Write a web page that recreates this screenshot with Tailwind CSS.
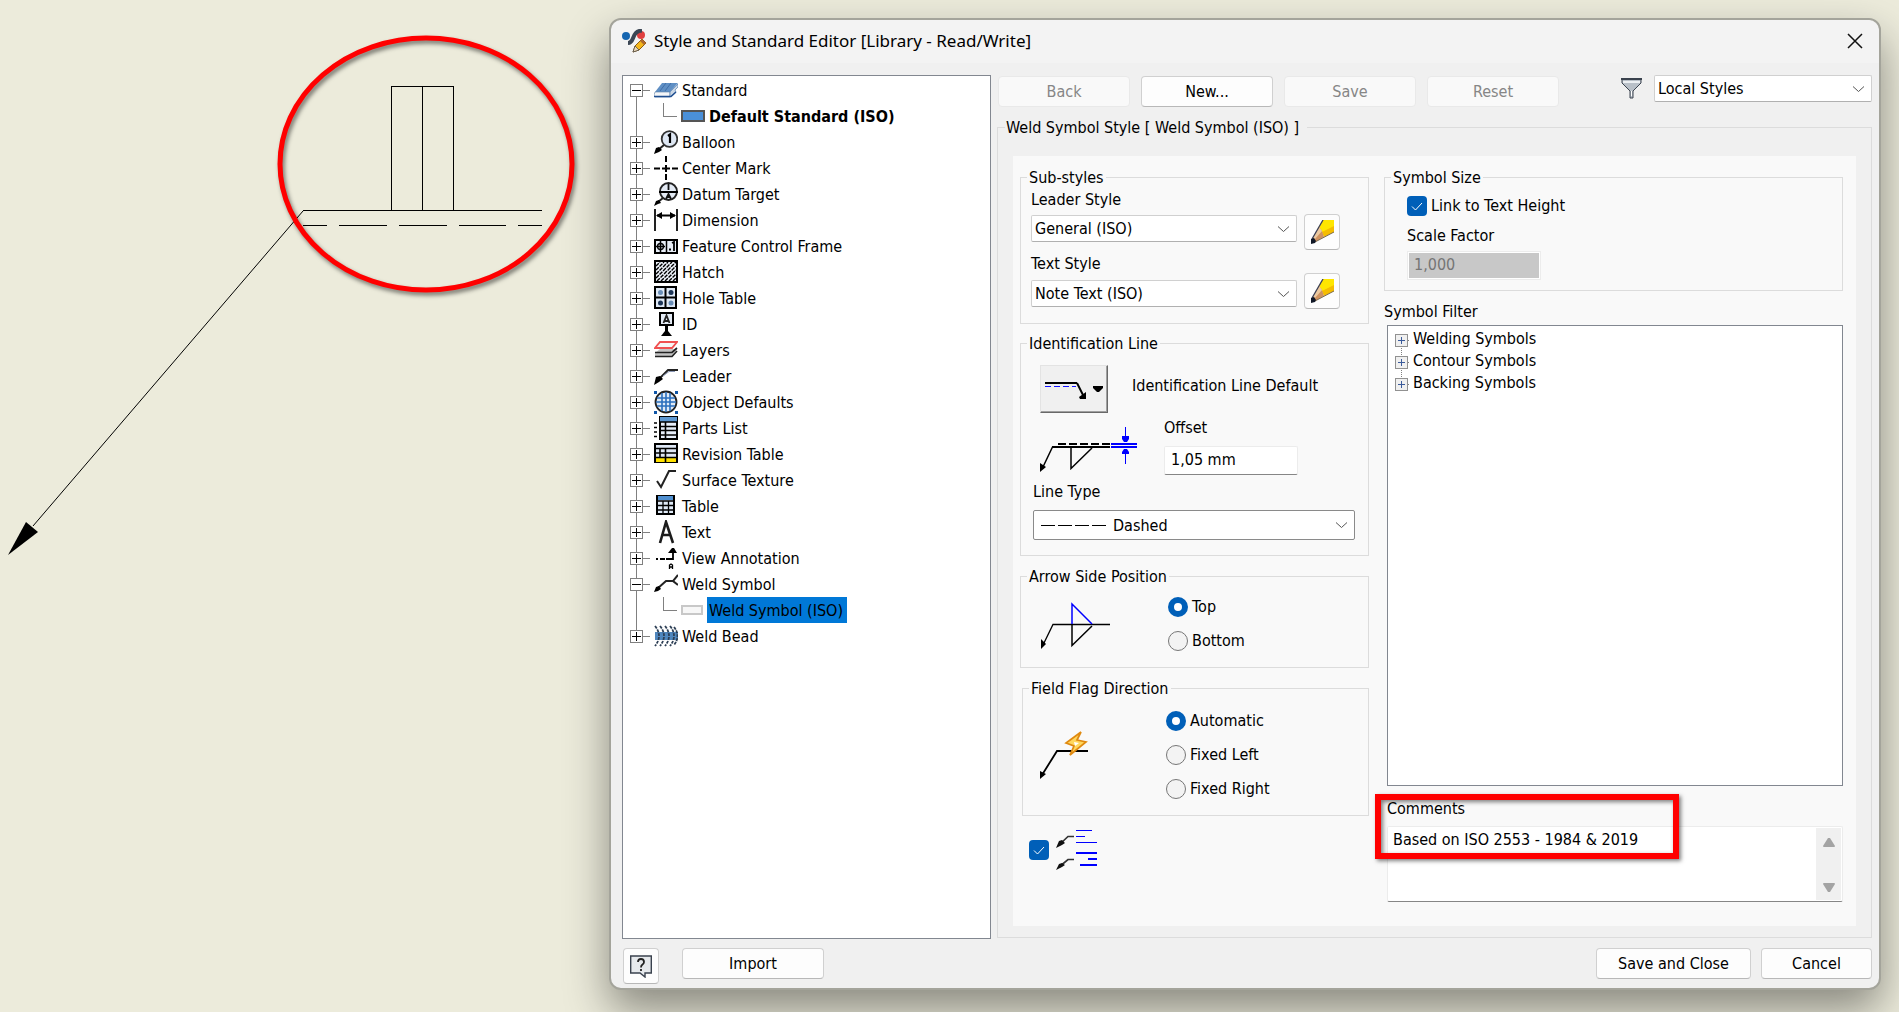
<!DOCTYPE html>
<html lang="en">
<head>
  <meta charset="utf-8"/>
  <meta content="width=device-width, initial-scale=1" name="viewport"/>
  <title>Style and Standard Editor</title>
  <script src="https://cdn.jsdelivr.net/npm/@tailwindcss/browser@4"></script>
</head>
<body class="bg-[#ecebdb] text-black font-['DejaVu_Sans_Condensed','DejaVu_Sans',sans-serif] text-base leading-6">
<main class="flex min-h-screen pt-[18px] pb-[22px] pr-[18px] overflow-hidden relative">

  <!-- Drawing sheet -->
  <div class="w-[609px] shrink-0">
    <svg class="absolute left-0 top-0" width="609" height="600" fill="none" stroke="#000">
      <path d="M391.500 210V86.500H453.500V210M422.500 86V210M303 210.500H542" shape-rendering="crispEdges"/>
      <path d="M303 225.500H327M339 225.500H387M399 225.500H447M459 225.500H506M518 225.500H542" shape-rendering="crispEdges"/>
      <path d="M303 211L33 526"/>
      <path d="M8 555L26 522L38 532Z" fill="#000" stroke="none"/>
      <ellipse cx="426" cy="164" rx="146" ry="126" stroke="#f00" stroke-width="5" class="drop-shadow-[2px_3px_2px_rgba(0,0,0,0.5)]"/>
    </svg>
  </div>

  <!-- Dialog -->
  <section class="relative flex-1 flex flex-col rounded-xl border-2 border-[#a4a49b] bg-[#f0f0f0] shadow-[0_20px_44px_rgba(0,0,0,0.42)]">
    <header class="h-[43px] shrink-0 rounded-t-xl bg-[#f3f3f3] flex items-center pb-0.5 pl-[11px] pr-4">
      <svg width="24" height="24" viewBox="0 0 24 24">
        <circle cx="4" cy="7" r="4" fill="#1565b0"/>
        <circle cx="19" cy="6" r="4" fill="#e04040"/>
        <path d="M6 14C13 14 9 2 20 1.500" fill="none" stroke="#3c4654" stroke-width="4"/>
        <path d="M11 23L13 17L20 10L24 14L17 21Z" fill="#f5b81c" stroke="#8a5a14"/>
        <path d="M11 23L13 17L17 21Z" fill="#ecd9b8" stroke="#444" stroke-width=".7"/>
        <path d="M20 10L24 14L22 16L18 12Z" fill="#b06a30"/>
      </svg>
      <h1 class="ml-2 flex-1 font-['Noto_Sans',sans-serif] text-[17px]">Style and Standard Editor [Library - Read/Write]</h1>
      <button aria-label="Close">
        <svg width="16" height="16" viewBox="0 0 16 16" stroke="#111" stroke-width="1.500"><path d="M1 1L15 15M15 1L1 15"/></svg>
      </button>
    </header>

    <div class="flex-1 flex flex-col pt-3 pb-1 pl-[11px] pr-[7px]">
      <div class="flex-1 flex gap-[6px]">

        <!-- Style tree, filled by the script below -->
        <nav class="w-[369px] shrink-0 bg-white border border-[#828790] pt-px pl-[7px]">
          <ul id="styleTree"></ul>
        </nav>

        <div class="flex-1 flex flex-col pb-px">
          <!-- Toolbar -->
          <div class="h-8 mb-[10px] flex items-start">
            <div class="flex gap-[11px] pt-px pl-px">
              <button disabled class="w-[132px] h-[31px] rounded bg-[#f9f9f9] border border-[#e9e9e9] text-[#868686]">Back</button>
              <button class="w-[132px] h-[31px] rounded bg-[#fdfdfd] border border-[#d0d0d0] border-b-[#b8b8b8]">New...</button>
              <button disabled class="w-[132px] h-[31px] rounded bg-[#f9f9f9] border border-[#e9e9e9] text-[#868686]">Save</button>
              <button disabled class="w-[132px] h-[31px] rounded bg-[#f9f9f9] border border-[#e9e9e9] text-[#868686]">Reset</button>
            </div>
            <svg class="ml-auto mr-3 mt-[3px]" width="21" height="21" viewBox="0 0 21 21">
              <path d="M1 1H20V5L12 13V20H9V13L1 5Z" fill="#b9c0c8" stroke="#3c4450"/>
              <path d="M0 0H21V2H0Z" fill="#3a424e"/>
              <path d="M2 3H19V5H2Z" fill="#eceff2"/>
              <path d="M10 13H11V18H10Z" fill="#fff"/>
            </svg>
            <div class="relative">
              <select aria-label="Style filter" class="block appearance-none w-[218px] h-[27px] bg-white border border-[#d0d0d0] border-b-[#b0b0b0] rounded-xs pl-[3px] pt-px leading-5">
                <option>Local Styles</option>
              </select>
              <svg class="absolute right-2 top-[11px] pointer-events-none" width="11" height="6" fill="none" stroke="#555"><path d="M0 .5L5.500 5.500L11 .5"/></svg>
            </div>
          </div>

          <fieldset class="flex-1 flex flex-col border border-[#dcdcdc] pt-[19px] pb-[11px] px-[15px]">
            <legend class="-ml-2 px-px pr-2 h-5 leading-[22px]">Weld Symbol Style [ Weld Symbol (ISO) ]</legend>

            <div class="flex-1 flex gap-[15px] bg-[#f9f9f9] pt-[11px] pb-6 pl-[7px] pr-[13px]">
              <!-- Left column -->
              <div class="w-[349px] shrink-0">
                <fieldset class="border border-[#dcdcdc] px-[10px] pb-[14px] flex gap-[7px]">
                  <legend class="-ml-1 px-0.5 h-5 leading-[22px]">Sub-styles</legend>
                  <div class="w-[266px]">
                    <label for="leaderStyle" class="block h-6 leading-[26px]">Leader Style</label>
                    <div class="relative mt-1 mb-[9px]">
                      <select id="leaderStyle" class="block appearance-none w-full h-[27px] bg-white border border-[#d0d0d0] border-b-[#b0b0b0] rounded-xs pl-[3px] pt-px leading-5">
                        <option>General (ISO)</option>
                      </select>
                      <svg class="absolute right-2 top-[11px] pointer-events-none" width="11" height="6" fill="none" stroke="#555"><path d="M0 .5L5.500 5.500L11 .5"/></svg>
                    </div>
                    <label for="textStyle" class="block h-6 leading-[26px]">Text Style</label>
                    <div class="relative mt-[5px]">
                      <select id="textStyle" class="block appearance-none w-full h-[27px] bg-white border border-[#d0d0d0] border-b-[#b0b0b0] rounded-xs pl-[3px] pt-px leading-5">
                        <option>Note Text (ISO)</option>
                      </select>
                      <svg class="absolute right-2 top-[11px] pointer-events-none" width="11" height="6" fill="none" stroke="#555"><path d="M0 .5L5.500 5.500L11 .5"/></svg>
                    </div>
                  </div>
                  <div class="flex flex-col gap-[23px] pt-[27px]">
                    <button aria-label="Edit leader style" class="size-9 rounded border border-[#d0d0d0] border-b-[#b8b8b8] bg-[#fdfdfd] flex items-center justify-center">
                      <svg width="24" height="24" viewBox="0 0 24 24">
                        <path d="M13 0H24V12L14 16L9 7Z" fill="#ffe600"/>
                        <path d="M24 6V12L14 17L12 12Z" fill="#f5bd00"/>
                        <path d="M9 7L12 11L14 17L5 22L2 19Z" fill="#cf9260"/>
                        <path d="M9 7L12 11L5 19L3 18Z" fill="#ecc9a0"/>
                        <path d="M13 0L2 19" fill="none" stroke="#3a3f55" stroke-width="1.300"/>
                        <path d="M5 22L24 12" fill="none" stroke="#7a6a50"/>
                        <path d="M1 24L1 19L4 18L6 21L5 23Z" fill="#111827"/>
                      </svg>
                    </button>
                    <button aria-label="Edit text style" class="size-9 rounded border border-[#d0d0d0] border-b-[#b8b8b8] bg-[#fdfdfd] flex items-center justify-center">
                      <svg width="24" height="24" viewBox="0 0 24 24">
                        <path d="M13 0H24V12L14 16L9 7Z" fill="#ffe600"/>
                        <path d="M24 6V12L14 17L12 12Z" fill="#f5bd00"/>
                        <path d="M9 7L12 11L14 17L5 22L2 19Z" fill="#cf9260"/>
                        <path d="M9 7L12 11L5 19L3 18Z" fill="#ecc9a0"/>
                        <path d="M13 0L2 19" fill="none" stroke="#3a3f55" stroke-width="1.300"/>
                        <path d="M5 22L24 12" fill="none" stroke="#7a6a50"/>
                        <path d="M1 24L1 19L4 18L6 21L5 23Z" fill="#111827"/>
                      </svg>
                    </button>
                  </div>
                </fieldset>

                <fieldset class="mt-[9px] border border-[#dcdcdc] pt-3 px-3 pb-[15px]">
                  <legend class="-ml-[6px] px-0.5 h-5 leading-[22px]">Identification Line</legend>
                  <div class="pl-[7px] flex gap-6">
                    <button aria-label="Identification line" class="w-[68px] h-12 bg-[#f0f0f0] border border-[#e3e3e3] border-b-[#696969] border-r-[#696969] shadow-[inset_-1px_-1px_0_#a0a0a0]">
                      <svg width="66" height="46" viewBox="0 0 66 46">
                        <path d="M4 16H36V18H4Z"/>
                        <path d="M4 20.500H35" stroke="#1414ff" stroke-dasharray="6 3"/>
                        <path d="M36 17L42 29" stroke="#000" stroke-width="2"/>
                        <path d="M45 26V33H39L38 31Z"/>
                        <path d="M52 20H62V22L58 26H56L52 22Z"/>
                      </svg>
                    </button>
                    <span class="mt-2 leading-[26px]">Identification Line Default</span>
                  </div>
                  <div class="mt-0.5 pl-[7px] flex gap-[26px]">
                    <svg class="mt-[10px]" width="98" height="48" viewBox="0 0 98 48" fill="none" stroke="#000">
                      <path d="M12 22H70" stroke-width="2"/>
                      <path d="M18 19H70" stroke-width="2" stroke-dasharray="8 3"/>
                      <path d="M12.500 22L2 44M31 22V43.500L52 23" stroke-width="1.500"/>
                      <path d="M0 38L6 42L0 47Z" fill="#000" stroke="none"/>
                      <path d="M71 19H97M71 22H97" stroke="#00f" stroke-width="2"/>
                      <path d="M85.500 2V16M85.500 24V39" stroke="#00f"/>
                      <path d="M82 11H89V14L87 17H84L82 14ZM82 29H89V27L87 24H84L82 27Z" fill="#00f" stroke="none"/>
                    </svg>
                    <div>
                      <label for="offset" class="block h-6 leading-[26px]">Offset</label>
                      <input id="offset" type="text" value="1,05 mm" class="block mt-[7px] w-[134px] h-[29px] bg-white border border-[#ececec] border-b-[#868686] rounded-xs pl-[6px] pb-0.5"/>
                    </div>
                  </div>
                  <label for="lineType" class="block mt-1 h-6 leading-[26px]">Line Type</label>
                  <div class="relative mt-[7px]">
                    <select id="lineType" class="block appearance-none w-[322px] h-[30px] bg-white border border-[#8a8a8a] rounded-xs pl-[79px] pt-px leading-5">
                      <option>Dashed</option>
                    </select>
                    <svg class="absolute left-2 top-[15px] pointer-events-none" width="65" height="1"><path d="M0 .5H65" stroke="#000" stroke-dasharray="14 3"/></svg>
                    <svg class="absolute right-[9px] top-3 pointer-events-none" width="11" height="6" fill="none" stroke="#555"><path d="M0 .5L5.500 5.500L11 .5"/></svg>
                  </div>
                </fieldset>

                <fieldset class="mt-[10px] border border-[#dcdcdc] pt-[11px] pb-4 pl-[19px] flex gap-[58px]">
                  <legend class="-ml-[13px] px-0.5 h-5 leading-[22px]">Arrow Side Position</legend>
                  <svg class="mt-[5px]" width="70" height="48" viewBox="0 0 70 48" fill="none" stroke="#000">
                    <path d="M70 22.500H13L3 43" stroke-width="1.300"/>
                    <path d="M32 22V43.500L52 24" stroke-width="1.500"/>
                    <path d="M32 22V2L52 22" stroke="#00f" stroke-width="1.500"/>
                    <path d="M1 37L6 42L1 47Z" fill="#000" stroke="none"/>
                  </svg>
                  <div class="flex flex-col gap-[14px]">
                    <label class="flex items-center gap-1 h-5"><input type="radio" name="side" checked class="appearance-none size-5 rounded-full border border-[#767676] bg-[#f3f3f3] checked:border-[6px] checked:border-[#005fb8] checked:bg-white"/>Top</label>
                    <label class="flex items-center gap-1 h-5"><input type="radio" name="side" class="appearance-none size-5 rounded-full border border-[#767676] bg-[#f3f3f3] checked:border-[6px] checked:border-[#005fb8] checked:bg-white"/>Bottom</label>
                  </div>
                </fieldset>

                <fieldset class="mt-[10px] ml-0.5 border border-[#dcdcdc] pt-[13px] pb-4 pl-[17px] flex gap-[77px]">
                  <legend class="-ml-[11px] px-0.5 h-5 leading-[22px]">Field Flag Direction</legend>
                  <svg class="mt-[20px]" width="49" height="48" viewBox="0 0 49 48">
                    <path d="M2 44L17 20H48" fill="none" stroke="#000" stroke-width="1.800"/>
                    <path d="M0 40L6 43L0 48Z"/>
                    <path d="M41 1L26 12L34 15L30 24L46 11L37 9Z" fill="#ffd75e" stroke="#e08a10" stroke-width="1.700"/>
                    <path d="M34 11L39 12L35 15Z" fill="#fff"/>
                  </svg>
                  <div class="flex flex-col gap-[14px]">
                    <label class="flex items-center gap-1 h-5"><input type="radio" name="flag" checked class="appearance-none size-5 rounded-full border border-[#767676] bg-[#f3f3f3] checked:border-[6px] checked:border-[#005fb8] checked:bg-white"/>Automatic</label>
                    <label class="flex items-center gap-1 h-5"><input type="radio" name="flag" class="appearance-none size-5 rounded-full border border-[#767676] bg-[#f3f3f3] checked:border-[6px] checked:border-[#005fb8] checked:bg-white"/>Fixed Left</label>
                    <label class="flex items-center gap-1 h-5"><input type="radio" name="flag" class="appearance-none size-5 rounded-full border border-[#767676] bg-[#f3f3f3] checked:border-[6px] checked:border-[#005fb8] checked:bg-white"/>Fixed Right</label>
                  </div>
                </fieldset>

                <label class="mt-[13px] pl-[9px] flex items-center gap-[7px]">
                  <span class="relative size-5">
                    <input type="checkbox" checked aria-label="Align text with leader" class="appearance-none block size-5 rounded bg-[#005fb8]"/>
                    <svg class="absolute left-0 top-0 pointer-events-none" width="20" height="20" fill="none" stroke="#fff"><path d="M5 10.500L8.500 14L15 7"/></svg>
                  </span>
                  <svg width="42" height="42" viewBox="0 0 42 42" fill="none" stroke="#333">
                    <path d="M3 16L12 7.500H18M3 38L12 30.500H18" stroke-width="1.700"/>
                    <path d="M0 19L3 12L6 11L9 14L6 16ZM0 41L3 35L6 34L9 36L6 38Z" fill="#111" stroke="none"/>
                    <path d="M20 1.500H36M20 7.500H29M20 13.500H41" stroke="#00f"/>
                    <path d="M20 24H41M32 30H41M24 36H41" stroke="#00f" stroke-width="2"/>
                  </svg>
                </label>
              </div>

              <!-- Right column -->
              <div class="flex-1 flex flex-col">
                <fieldset class="border border-[#dcdcdc] pt-[9px] pb-[10px] pl-[22px]">
                  <legend class="-ml-4 px-0.5 h-5 leading-[22px]">Symbol Size</legend>
                  <label class="flex items-center gap-1 h-5">
                    <span class="relative size-5">
                      <input type="checkbox" checked class="appearance-none block size-5 rounded bg-[#005fb8]"/>
                      <svg class="absolute left-0 top-0 pointer-events-none" width="20" height="20" fill="none" stroke="#fff"><path d="M5 10.500L8.500 14L15 7"/></svg>
                    </span>
                    Link to Text Height
                  </label>
                  <label for="scaleFactor" class="block mt-[7px] h-6 leading-[26px]">Scale Factor</label>
                  <input id="scaleFactor" type="text" value="1,000" disabled class="block mt-1 w-[134px] h-[29px] border border-[#ececec] bg-[#c8c8c8] shadow-[inset_0_0_0_1px_#fff] pl-[6px] pb-0.5 text-[#757575]"/>
                </fieldset>

                <h2 class="mt-2 h-6 leading-[26px]">Symbol Filter</h2>
                <div class="flex-1 mt-0.5 ml-[3px] bg-white border border-[#828790] pt-[2px] pl-[7px]">
                  <ul id="filterTree"></ul>
                </div>

                <div class="relative ml-[3px] mt-[10px]">
                  <label for="comments" class="block h-6 leading-[26px]">Comments</label>
                  <div class="mt-[6px] h-[76px] flex bg-white border border-[#ececec] border-b-[#868686] rounded-xs p-px">
                    <textarea id="comments" class="flex-1 resize-none overflow-hidden pl-1">Based on ISO 2553 - 1984 &amp; 2019</textarea>
                    <div class="w-[25px] bg-[#f0f0f0] flex flex-col items-center justify-between pt-[10px] pb-2">
                      <svg width="12" height="9" fill="#a3a3a3"><path d="M1 9Q0 9 0 8L5 0H7L12 8Q12 9 11 9Z"/></svg>
                      <svg width="12" height="9" fill="#a3a3a3"><path d="M1 0Q0 0 0 1L5 9H7L12 1Q12 0 11 0Z"/></svg>
                    </div>
                  </div>
                  <!-- Highlight around the comment -->
                  <div class="absolute -left-3 -top-0.5 w-[304px] h-[65px] border-[6px] border-[#f00] pointer-events-none shadow-[2px_2px_4px_rgba(0,0,0,0.5),inset_2px_2px_4px_rgba(0,0,0,0.5)]"></div>
                </div>
              </div>
            </div>
          </fieldset>
        </div>
      </div>

      <!-- Footer -->
      <footer class="mt-[9px] flex items-start pl-px">
        <button aria-label="Help" class="size-9 rounded border border-[#d0d0d0] border-b-[#b8b8b8] bg-[#fdfdfd] flex items-center justify-center">
          <svg width="22" height="23" viewBox="0 0 22 23">
            <path d="M.7 1H21.300V18H15V22L10 18H.7Z" fill="#e6e9ec" stroke="#3a424e" stroke-width="1.400"/>
            <path d="M8 7Q8 4 11 4T14 7Q14 8.500 12.500 9.500T11 12.500M11 14V16" fill="none" stroke="#222" stroke-width="1.800"/>
          </svg>
        </button>
        <button class="ml-[23px] w-[142px] h-[31px] rounded bg-[#fdfdfd] border border-[#d0d0d0] border-b-[#b8b8b8]">Import</button>
        <button class="ml-auto w-[155px] h-[31px] rounded bg-[#fdfdfd] border border-[#d0d0d0] border-b-[#b8b8b8]">Save and Close</button>
        <button class="ml-[10px] w-[111px] h-[31px] rounded bg-[#fdfdfd] border border-[#d0d0d0] border-b-[#b8b8b8]">Cancel</button>
      </footer>
    </div>
  </section>
</main>

<script>
  // Icons are drawn on a 24x24 grid
  const icons = {
    standard: '<path d="M8 5H24L16 14H1Z" fill="#5f8fc4"/><path d="M12 5L6 13M17 5L11 13" stroke="#3f6ea8"/><path d="M1 14H16V19H1L0 17Z" fill="#f4f6f8" stroke="#5a7fa8" stroke-width=".6"/><path d="M16 14L24 6V9L21 12L22 14L16 19Z" fill="#c9d6e4" stroke="#3f6ea8" stroke-width=".6"/><path d="M0 18.500H17L22 14" fill="none" stroke="#1f4e90" stroke-width="1.500"/>',
    balloon: '<circle cx="15.500" cy="9" r="7.800" fill="#dfe8f4" stroke="#333" stroke-width="1.800"/><path d="M14 6L16 4.500V13" fill="none" stroke="#000" stroke-width="2.200"/><path d="M10 15L4 20" stroke="#222" stroke-width="2"/><path d="M0 24L2 18L5 17L8 20L5 22Z"/>',
    center: '<path d="M12 0V6M12 9V16M12 18V24M0 12.500H6M8 12.500H16M18 12.500H24" stroke="#000" stroke-width="2"/>',
    datum: '<circle cx="14.500" cy="9.500" r="8.500" fill="#e4ebf5" stroke="#222" stroke-width="1.800"/><path d="M5 10H24" stroke="#000" stroke-width="2"/><path d="M14.500 2V8M12 17L14.500 12L17 17M13 15H16" stroke="#111" fill="none" stroke-width="1.800"/><path d="M9 16L4 20" stroke="#222" stroke-width="2"/><path d="M0 24L2 19L5 18L7 21L4 22Z"/>',
    dimension: '<path d="M1 1V23M23 1V23" stroke="#222" stroke-width="2"/><path d="M3 7.500H21" stroke="#000" stroke-width="2"/><path d="M2 7.500L8 4V11ZM22 7.500L16 4V11Z"/>',
    fcf: '<path d="M1 6H23V19H1Z" fill="#e8eef7" stroke="#000" stroke-width="2"/><path d="M12.500 5V20M2 12.500H11M6.500 7V18" stroke="#000" stroke-width="1.500"/><circle cx="6.500" cy="12.500" r="3" fill="none" stroke="#000" stroke-width="1.300"/><path d="M15 15.500H17M18 9L20 8V17" stroke="#000" fill="none" stroke-width="1.800"/>',
    hatch: '<path d="M1 1H23V22H1Z" fill="#eef3fa" stroke="#000" stroke-width="2"/><path d="M2 6L6 2M2 10L10 2M2 14L14 2M2 18L18 2M3 21L22 2M7 21L22 6M11 21L22 10M15 21L22 14M19 21L22 18" stroke="#000" stroke-dasharray="4 1" stroke-width="1.400"/>',
    hole: '<path d="M1 1H22V22H1Z" fill="#dfe9f6" stroke="#000" stroke-width="2"/><path d="M11.500 1V22M1 11.500H22" stroke="#000" stroke-width="2"/><circle cx="6.500" cy="6.500" r="2.500" fill="#6b8fb8"/><circle cx="17" cy="6.500" r="2.500" fill="#1d3557"/><circle cx="6.500" cy="17" r="2.500" fill="#1d3557"/><circle cx="17" cy="17" r="2.500" fill="#6b8fb8"/>',
    id: '<path d="M6 1H19V13H6Z" fill="#e4ebf5" stroke="#000" stroke-width="2"/><path d="M9.500 11L12.500 3.500L15.500 11M10 9H15" fill="none" stroke="#222" stroke-width="1.800"/><path d="M12.500 14V20" stroke="#000" stroke-width="3"/><path d="M7 24L11 19H14L18 24Z"/>',
    layers: '<path d="M1 15L6 11H23L18 18H1Z" fill="#8a8a8a" opacity=".5"/><path d="M1 18.500H18L23 13M1 14.500H18L23 10" fill="none" stroke="#222" stroke-width="1.700"/><path d="M1 10H18L23 4H6Z" fill="#f6f6f6" stroke="#f05050" stroke-width="1.800"/>',
    leader: '<path d="M4 16L14 6H24" fill="none" stroke="#222" stroke-width="1.800"/><path d="M0 21L2 13L6 12L9 15L5 18Z"/><path d="M9 12L15 7.500H21" stroke="#8a97b5" fill="none"/>',
    object: '<circle cx="12" cy="12" r="10.500" fill="#dfeaf7" stroke="#222" stroke-width="1.800"/><path d="M8 3V21M12 2V22M16 3V21M3 8H21M2 12H22M3 16H21" stroke="#2a6fbd" stroke-width="1.600"/><path d="M0 1H3V4H0ZM21 1H24V4H21ZM0 21H3V24H0ZM21 21H24V24H21Z" fill="#0f56a8"/>',
    parts: '<path d="M6 1H23V23H6Z" fill="#e6eefa" stroke="#000" stroke-width="2"/><path d="M6 1H23V6H6Z" fill="#5d97d1"/><path d="M5 6H24M5 10.500H24M5 14.500H24M5 19H24M11.500 6V23" stroke="#000" stroke-width="1.600"/><path d="M0 7H3M0 11.500H3M0 16H3M0 20.500H3" stroke="#000" stroke-width="1.500"/>',
    revision: '<path d="M1 2H23V20H1Z" fill="#dfe8f6" stroke="#000" stroke-width="2"/><path d="M2 16H22V20H2Z" fill="#ffe100"/><path d="M0 6.500H24M0 11H24M0 15.500H24M11.500 6V20M6 6V16" stroke="#000" stroke-width="1.600"/>',
    surface: '<path d="M3 13L7 19L15 3H22" fill="none" stroke="#222" stroke-width="2"/>',
    table: '<path d="M3 2H20V20H3Z" fill="#e0ebf8" stroke="#000" stroke-width="2"/><path d="M4 2H19V6H4Z" fill="#4f8fd0"/><path d="M2 7H21M2 11.500H21M2 16H21M9 7V20M14.500 7V20" stroke="#000" stroke-width="1.300"/>',
    text: '<path d="M6 23L12 2L19 23M8 15H17" fill="none" stroke="#1c1c1c" stroke-width="2.600"/>',
    view: '<path d="M2 13H4M6 13H11M12 13H19V5" fill="none" stroke="#000" stroke-width="1.800"/><path d="M14 7L18 2H20L23 7Z"/><path d="M15.500 23V19L17 18L18.500 19V23M15.500 21H18.500" fill="none" stroke="#000" stroke-width="1.300"/>',
    weld: '<path d="M3 17L12 9H20M24 3L19 9L24 13" fill="none" stroke="#222" stroke-width="2"/><path d="M0 20L2 15L5 14L7 17L4 19Z"/>',
    bead: '<path d="M1 8H24V16H1Z" fill="#4f86bd"/><path d="M1 2Q9 12 1 22M6 2Q14 12 6 22M11 2Q19 12 11 22M16 2Q24 12 16 22M20 3Q27 12 20 21" fill="none" stroke="#2d3f55" stroke-width="1.800" stroke-dasharray="3 1"/>'
  };

  const styles = [
    ['Standard', 'standard', { name: 'Default Standard (ISO)', bold: true }],
    ['Balloon', 'balloon'],
    ['Center Mark', 'center'],
    ['Datum Target', 'datum'],
    ['Dimension', 'dimension'],
    ['Feature Control Frame', 'fcf'],
    ['Hatch', 'hatch'],
    ['Hole Table', 'hole'],
    ['ID', 'id'],
    ['Layers', 'layers'],
    ['Leader', 'leader'],
    ['Object Defaults', 'object'],
    ['Parts List', 'parts'],
    ['Revision Table', 'revision'],
    ['Surface Texture', 'surface'],
    ['Table', 'table'],
    ['Text', 'text'],
    ['View Annotation', 'view'],
    ['Weld Symbol', 'weld', { name: 'Weld Symbol (ISO)' }],
    ['Weld Bead', 'bead']
  ];

  // Expander box with the connector lines of its row
  function expander(open, first, last) {
    return `<svg width="24" height="26" class="shrink-0" shape-rendering="crispEdges" fill="none" stroke="#808080">
      <path d="M6.500 ${first ? 13 : 0}V${last ? 13 : 26}M13 13.500H20"/>
      <rect x=".5" y="7.500" width="12" height="12" fill="#fff"/>
      <path d="M2 13.500H11${open ? '' : 'M6.500 9V18'}" stroke="#000"/>
    </svg>`;
  }

  document.getElementById('styleTree').innerHTML = styles.map(([name, icon, child], i) => `
    <li>
      <div class="flex items-center h-[26px]">
        ${expander(child, i === 0, i === styles.length - 1)}
        <svg width="24" height="24" viewBox="0 0 24 24" class="shrink-0 mr-1">${icons[icon]}</svg>
        <span class="pt-0.5">${name}</span>
      </div>
      ${child ? `
      <div class="flex items-center h-[26px]">
        <svg width="51" height="26" class="shrink-0" fill="none" stroke="#808080" shape-rendering="crispEdges"><path d="M6.500 0V26M33.500 0V13.500H47"/></svg>
        ${child.bold
          ? '<svg width="24" height="12" class="shrink-0 mr-1"><rect x="1" y="1" width="22" height="10" fill="#4a90d9" stroke="#555" stroke-width="2"/></svg>'
          : '<svg width="22" height="10" class="shrink-0 mr-1"><rect x="1" y="1" width="20" height="8" fill="#f7f7f7" stroke="#c8c8c8" stroke-width="2"/></svg>'}
        <span class="${child.bold ? 'font-bold pt-0.5' : 'bg-[#0078d7] h-[26px] pt-0.5 pl-0.5 pr-1'}">${child.name}</span>
      </div>` : ''}
    </li>`).join('');

  document.getElementById('filterTree').innerHTML = ['Welding Symbols', 'Contour Symbols', 'Backing Symbols'].map((name, i) => `
    <li class="flex items-center h-[22px]">
      <svg width="15" height="22" class="shrink-0 mr-[3px]" shape-rendering="crispEdges" fill="none">
        <path d="M6.500 ${i ? 0 : 12}V${i < 2 ? 22 : 12}M13 12.500H15" stroke="#808080" stroke-dasharray="1 1"/>
        <rect x=".5" y="6.500" width="12" height="12" fill="#f0f0f0" stroke="#919191"/>
        <path d="M3 12.500H10M6.500 9V16" stroke="#3b5b9b"/>
      </svg>
      <span>${name}</span>
    </li>`).join('');
</script>

</body>
</html>
